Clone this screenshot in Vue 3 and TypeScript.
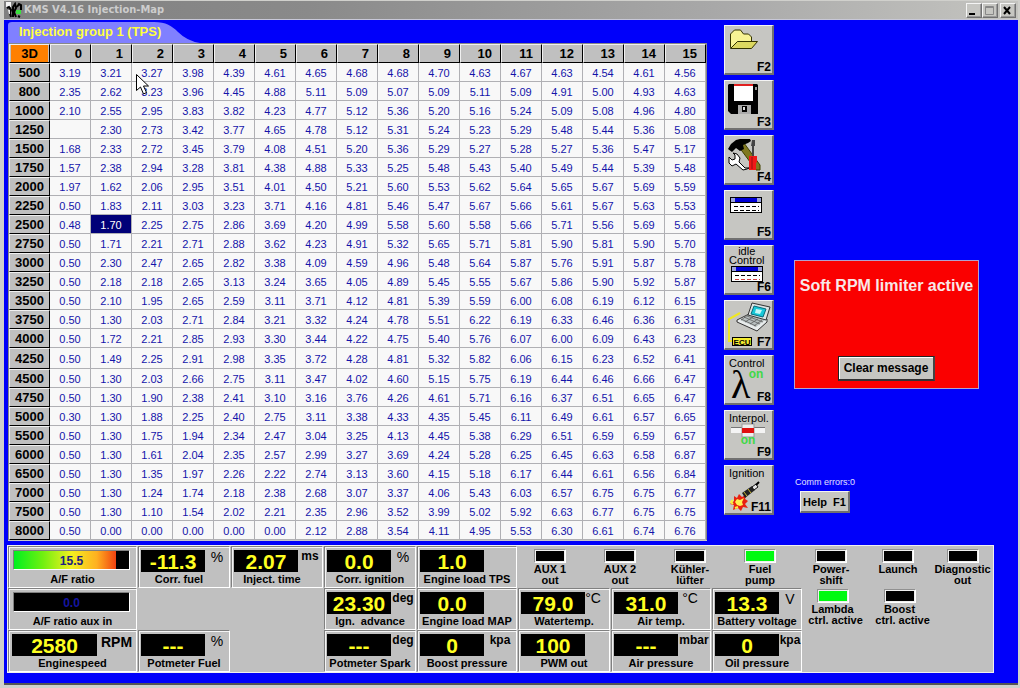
<script setup lang="ts">
import { ref } from 'vue'

interface Gauge {
  label: string
  value: string
  unit?: string
  area: string
  kind?: 'wide' | 'bar' | 'barOff'
  unitStyle?: 'plain' | 'large'
}

interface Lamp {
  lines: string[]
  on: boolean
}

const columns = Array.from({ length: 16 }, (_, i) => i)

const source = `500|3.19 3.21 3.27 3.98 4.39 4.61 4.65 4.68 4.68 4.70 4.63 4.67 4.63 4.54 4.61 4.56
800|2.35 2.62 3.23 3.96 4.45 4.88 5.11 5.09 5.07 5.09 5.11 5.09 4.91 5.00 4.93 4.63
1000|2.10 2.55 2.95 3.83 3.82 4.23 4.77 5.12 5.36 5.20 5.16 5.24 5.09 5.08 4.96 4.80
1250|- 2.30 2.73 3.42 3.77 4.65 4.78 5.12 5.31 5.24 5.23 5.29 5.48 5.44 5.36 5.08
1500|1.68 2.33 2.72 3.45 3.79 4.08 4.51 5.20 5.36 5.29 5.27 5.28 5.27 5.36 5.47 5.17
1750|1.57 2.38 2.94 3.28 3.81 4.38 4.88 5.33 5.25 5.48 5.43 5.40 5.49 5.44 5.39 5.48
2000|1.97 1.62 2.06 2.95 3.51 4.01 4.50 5.21 5.60 5.53 5.62 5.64 5.65 5.67 5.69 5.59
2250|0.50 1.83 2.11 3.03 3.23 3.71 4.16 4.81 5.46 5.47 5.67 5.66 5.61 5.67 5.63 5.53
2500|0.48 1.70 2.25 2.75 2.86 3.69 4.20 4.99 5.58 5.60 5.58 5.66 5.71 5.56 5.69 5.66
2750|0.50 1.71 2.21 2.71 2.88 3.62 4.23 4.91 5.32 5.65 5.71 5.81 5.90 5.81 5.90 5.70
3000|0.50 2.30 2.47 2.65 2.82 3.38 4.09 4.59 4.96 5.48 5.64 5.87 5.76 5.91 5.87 5.78
3250|0.50 2.18 2.18 2.65 3.13 3.24 3.65 4.05 4.89 5.45 5.55 5.67 5.86 5.90 5.92 5.87
3500|0.50 2.10 1.95 2.65 2.59 3.11 3.71 4.12 4.81 5.39 5.59 6.00 6.08 6.19 6.12 6.15
3750|0.50 1.30 2.03 2.71 2.84 3.21 3.32 4.24 4.78 5.51 6.22 6.19 6.33 6.46 6.36 6.31
4000|0.50 1.72 2.21 2.85 2.93 3.30 3.44 4.22 4.75 5.40 5.76 6.07 6.00 6.09 6.43 6.23
4250|0.50 1.49 2.25 2.91 2.98 3.35 3.72 4.28 4.81 5.32 5.82 6.06 6.15 6.23 6.52 6.41
4500|0.50 1.30 2.03 2.66 2.75 3.11 3.47 4.02 4.60 5.15 5.75 6.19 6.44 6.46 6.66 6.47
4750|0.50 1.30 1.90 2.38 2.41 3.10 3.16 3.76 4.26 4.61 5.71 6.16 6.37 6.51 6.65 6.47
5000|0.30 1.30 1.88 2.25 2.40 2.75 3.11 3.38 4.33 4.35 5.45 6.11 6.49 6.61 6.57 6.65
5500|0.50 1.30 1.75 1.94 2.34 2.47 3.04 3.25 4.13 4.45 5.38 6.29 6.51 6.59 6.59 6.57
6000|0.50 1.30 1.61 2.04 2.35 2.57 2.99 3.27 3.69 4.24 5.28 6.25 6.45 6.63 6.58 6.87
6500|0.50 1.30 1.35 1.97 2.26 2.22 2.74 3.13 3.60 4.15 5.18 6.17 6.44 6.61 6.56 6.84
7000|0.50 1.30 1.24 1.74 2.18 2.38 2.68 3.07 3.37 4.06 5.43 6.03 6.57 6.75 6.75 6.77
7500|0.50 1.30 1.10 1.54 2.02 2.21 2.35 2.96 3.52 3.99 5.02 5.92 6.63 6.77 6.75 6.75
8000|0.50 0.00 0.00 0.00 0.00 0.00 2.12 2.88 3.54 4.11 4.95 5.53 6.30 6.61 6.74 6.76`

const rows = source.split('\n').map((line) => {
  const [rpm, values] = line.split('|')
  return { rpm, values: values.split(' ').map((v) => (v === '-' ? '' : v)) }
})

const selected = ref({ rpm: '2500', column: 1 })

const tools = [
  { key: 'F2', name: 'Open', caption: '' },
  { key: 'F3', name: 'Save', caption: '' },
  { key: 'F4', name: 'Settings', caption: '' },
  { key: 'F5', name: 'Table', caption: '' },
  { key: 'F6', name: 'Idle control', caption: 'idle\nControl' },
  { key: 'F7', name: 'ECU link', caption: '' },
  { key: 'F8', name: 'Lambda control', caption: 'Control' },
  { key: 'F9', name: 'Interpolation', caption: 'Interpol.' },
  { key: 'F11', name: 'Ignition', caption: 'Ignition' },
]

const mainGauges: Gauge[] = [
  { label: 'A/F ratio', value: '15.5', area: 'a1', kind: 'bar' },
  { label: 'Corr. fuel', value: '-11.3', unit: '%', area: 'b1', unitStyle: 'large' },
  { label: 'Inject. time', value: '2.07', unit: 'ms', area: 'c1' },
  { label: 'Corr. ignition', value: '0.0', unit: '%', area: 'd1', unitStyle: 'large' },
  { label: 'Engine load TPS', value: '1.0', area: 'e1' },
  { label: 'A/F ratio aux in', value: '0.0', area: 'a2', kind: 'barOff' },
  { label: 'Ign.\u00a0 advance', value: '23.30', unit: 'deg', area: 'd2' },
  { label: 'Engine load MAP', value: '0.0', area: 'e2' },
  { label: 'Enginespeed', value: '2580', unit: 'RPM', area: 'a3', kind: 'wide' },
  { label: 'Potmeter Fuel', value: '---', unit: '%', area: 'b3', unitStyle: 'large' },
  { label: 'Potmeter Spark', value: '---', unit: 'deg', area: 'd3' },
  { label: 'Boost pressure', value: '0', unit: 'kpa', area: 'e3' },
]

const sensorGauges: Gauge[] = [
  { label: 'Watertemp.', value: '79.0', unit: '°C', area: 'a1', unitStyle: 'plain' },
  { label: 'Air temp.', value: '31.0', unit: '°C', area: 'b1', unitStyle: 'plain' },
  { label: 'Battery voltage', value: '13.3', unit: 'V', area: 'c1', unitStyle: 'large' },
  { label: 'PWM out', value: '100', area: 'a2' },
  { label: 'Air pressure', value: '---', unit: 'mbar', area: 'b2' },
  { label: 'Oil pressure', value: '0', unit: 'kpa', area: 'c2' },
]

const outputs: Lamp[] = [
  { lines: ['AUX 1', 'out'], on: false },
  { lines: ['AUX 2', 'out'], on: false },
  { lines: ['Kühler-', 'lüfter'], on: false },
  { lines: ['Fuel', 'pump'], on: true },
  { lines: ['Power-', 'shift'], on: false },
  { lines: ['Launch'], on: false },
  { lines: ['Diagnostic', 'out'], on: false },
]

const controls: Lamp[] = [
  { lines: ['Lambda', '\u00a0\u00a0ctrl. active'], on: true },
  { lines: ['Boost', '\u00a0\u00a0ctrl. active'], on: false },
]
</script>

<template>
  <div class="window">
    <header class="titlebar">
      <svg class="app-icon" viewBox="0 0 16 16" aria-hidden="true">
        <rect x="0" y="0" width="5" height="5" fill="#f4f4f4" />
        <path d="M1 6l2-1 2 3-1 3 1 4M7 15V5l2-3 1 4-2 4 2 5M11 5l2-3 2 1v5M12 14l2 1" fill="none" stroke="#000" stroke-width="2" />
        <path d="M2 8h2v4H3z" fill="#e8e8e8" />
        <rect x="10" y="8" width="5" height="4" fill="#39e03c" />
      </svg>
      <h1>KMS V4.16 Injection-Map</h1>
      <div class="caption-buttons">
        <button type="button" aria-label="Minimize">
          <svg viewBox="0 0 12 11"><rect x="2" y="8" width="6" height="2" fill="#000" /></svg>
        </button>
        <button type="button" aria-label="Maximize">
          <svg viewBox="0 0 12 11"><path d="M2.5 1.5h8v8h-8zM2 2.5h9" fill="none" stroke="#888" /></svg>
        </button>
        <button type="button" class="close" aria-label="Close">
          <svg viewBox="0 0 12 11"><path d="M3 2l6 7M9 2l-6 7" fill="none" stroke="#000" stroke-width="2" /></svg>
        </button>
      </div>
    </header>

    <main class="client">
      <div class="upper">
        <section class="map">
          <div class="tab">
            <svg class="tab-shape" viewBox="0 0 192 21" aria-hidden="true">
              <path d="M0 21V3Q0 0 4 0H146C158 0 164 4 170 10Q179 19 192 21Z" fill="#8080ff" />
            </svg>
            <h2>Injection group 1 (TPS)</h2>
          </div>
          <table>
            <thead>
              <tr>
                <th class="corner"><button type="button">3D</button></th>
                <th v-for="c in columns" :key="c" scope="col" class="col-head">{{ c }}</th>
              </tr>
            </thead>
            <tbody>
              <tr v-for="row in rows" :key="row.rpm" :class="{ tall: row.rpm === '4250' }">
                <th scope="row">{{ row.rpm }}</th>
                <td
                  v-for="(v, i) in row.values"
                  :key="i"
                  :class="{ selected: selected.rpm === row.rpm && selected.column === i }"
                  @click="selected = { rpm: row.rpm, column: i }"
                >{{ v }}</td>
              </tr>
            </tbody>
          </table>
        </section>

        <nav class="tools" aria-label="Functions">
          <button v-for="t in tools" :key="t.key" type="button" :title="t.name">
            <svg viewBox="0 0 50 50" aria-hidden="true">
              <g v-if="t.key === 'F2'" stroke="#333300" stroke-linejoin="round">
                <path d="M6.500 22V9l4-4h6l3 4h5l3 3v5H13l-6 6z" fill="#f8f494" />
                <path d="M6.500 23.500l7-7h20l-6 7z" fill="#dcd860" />
              </g>
              <g v-else-if="t.key === 'F3'">
                <path d="M5 4h28l1 1v29H7l-3-3V5z" fill="#000" />
                <rect x="10" y="4" width="19" height="2" fill="#e02020" />
                <rect x="10" y="6" width="19" height="15" fill="#fff" />
                <rect x="31" y="7" width="2" height="3" fill="#999" />
                <rect x="14" y="25" width="13" height="9" fill="#aaa" />
                <rect x="18" y="26" width="5" height="6" fill="#000" />
                <rect x="19" y="27" width="2" height="3" fill="#ddd" />
              </g>
              <g v-else-if="t.key === 'F4'">
                <path d="M15 12l5-4 16 22v5h-4z" fill="#807820" stroke="#404000" />
                <path d="M4 14l3-5 5-4 4-1 10 0 1 2-3 2-5 2 1 4-4 2-4-3-4 4z" fill="#000" />
                <path d="M28 5h3v6h-1v10h-2V11h-1z" fill="#444" />
                <path d="M25 21h8v6l-1 1v7h-7v-7z" fill="#f01818" />
                <path d="M28 22v12" stroke="#901010" />
                <path d="M5 22l3 3 3-1v-4l-2-2 4 1 3 4-1 4 6 6h4l-2 1-4 1-7-6-4 2-3-3z" fill="#fff" stroke="#000" />
              </g>
              <g v-else-if="t.key === 'F5' || t.key === 'F6'" :transform="t.key === 'F6' ? 'translate(1 14)' : undefined">
                <rect x="6.500" y="7.500" width="31" height="15" fill="#fff" stroke="#000" />
                <rect x="7" y="8" width="30" height="4" fill="#0000d8" />
                <path d="M7 8h4v4H7zM33 8h4v4h-4z" fill="#9ca4dc" />
                <path d="M7 12.500h30" stroke="#000" />
                <path d="M10 16.500h25" stroke="#000" stroke-dasharray="4 2" />
                <path d="M10 20.500h25" :stroke="t.key === 'F6' ? '#d04040' : '#000'" stroke-dasharray="4 2" />
              </g>
              <g v-else-if="t.key === 'F7'">
                <path d="M8 41H5V19l11-6" fill="none" stroke="#f0e820" stroke-width="2" />
                <path d="M25 14l-12 6v2l20 9 10-9v-3z" fill="#e8ecec" stroke="#333" />
                <path d="M24 15l17 5-9 7-16-7z" fill="#b8c0c0" />
                <path d="M20 17l16 7M17 19l15 7M23 16l16 6M24 15l-7 5M29 17l-8 5M34 19l-8 5M38 20l-8 6" stroke="#555" stroke-width=".7" />
                <path d="M28 3l18 4-4 13-18-5z" fill="#dce4e4" stroke="#333" />
                <path d="M30 6l12 3-3 8-12-3z" fill="#18c8d8" stroke="#086878" />
                <path d="M32 9l6 1-2 4-5-1z" fill="#c8f8f8" />
                <rect x="8.500" y="37.500" width="19" height="8" fill="#f4ec30" stroke="#000" />
                <text x="18" y="45" text-anchor="middle" class="ecu">ECU</text>
              </g>
              <g v-else-if="t.key === 'F8'">
                <text x="7" y="43" class="lambda">λ</text>
                <text x="32" y="23" text-anchor="middle" class="on">on</text>
              </g>
              <g v-else-if="t.key === 'F9'">
                <rect x="7" y="17" width="34" height="6" fill="#f4f4f4" />
                <path d="M7 17.500h34" stroke="#777" />
                <rect x="18" y="14" width="12" height="13" fill="#eee" stroke="#999" />
                <rect x="18" y="18" width="12" height="5" fill="#e01010" />
                <text x="24" y="34" text-anchor="middle" class="on">on</text>
              </g>
              <g v-else>
                <path d="M10 31l3 2 2-4 3 3 5-3-2 5 3 2-3 3 3 4-5-1-2 4-3-3-5 2 1-5-4-1 4-3z" fill="#e82010" />
                <path d="M13 34l3 1 4-2-2 4 1 3-3 1-3-1-2-3z" fill="#fff050" />
                <path d="M9 35l-2 2 2 2M11 43l3-1" stroke="#f8f040" stroke-width="2" fill="none" />
                <path d="M18 28l10-7 3 4-10 8z" fill="#222" />
                <path d="M20 27l3 4M24 24l3 4" stroke="#c8b830" />
                <path d="M28 22l4-3 2 3-4 3z" fill="#e8e8e8" stroke="#111" />
                <path d="M32 20l3-3" stroke="#000" stroke-width="2" />
              </g>
            </svg>
            <span v-if="t.caption" class="tool-caption" :class="{ stacked: t.key === 'F6' }">{{ t.caption }}</span>
            <span class="tool-key">{{ t.key }}</span>
          </button>
        </nav>

        <aside class="side">
          <section class="alert" role="alert">
            <p>Soft RPM limiter active</p>
            <button type="button">Clear message</button>
          </section>
          <div class="status">
            <p>Comm errors:0</p>
            <button type="button">Help&nbsp; F1</button>
          </div>
        </aside>
      </div>

      <section class="dashboard">
        <div class="gauges main-gauges">
          <div v-for="g in mainGauges" :key="g.label" class="gauge" :class="[g.area, g.kind]">
            <div class="reading">
              <output :aria-label="g.label">{{ g.value }}</output>
              <span v-if="g.unit" class="unit" :class="g.unitStyle">{{ g.unit }}</span>
            </div>
            <span class="gauge-label">{{ g.label }}</span>
          </div>
        </div>
        <div class="right-dash">
          <div class="outputs">
            <div v-for="l in outputs" :key="l.lines[0]" class="lamp">
              <i :class="{ on: l.on }"></i>
              <span v-for="line in l.lines" :key="line">{{ line }}</span>
            </div>
          </div>
          <div class="sensor-row">
            <div class="gauges sensor-gauges">
              <div v-for="g in sensorGauges" :key="g.label" class="gauge" :class="g.area">
                <div class="reading">
                  <output :aria-label="g.label">{{ g.value }}</output>
                  <span v-if="g.unit" class="unit" :class="g.unitStyle">{{ g.unit }}</span>
                </div>
                <span class="gauge-label">{{ g.label }}</span>
              </div>
            </div>
            <div class="controls">
              <div v-for="l in controls" :key="l.lines[0]" class="lamp">
                <i :class="{ on: l.on }"></i>
                <span v-for="line in l.lines" :key="line">{{ line }}</span>
              </div>
            </div>
          </div>
        </div>
      </section>
    </main>

    <svg class="pointer" viewBox="0 0 13 21" aria-hidden="true">
      <path d="M.5 .5v16l4-3.500 3 7 3-1.500-3-6.500h5z" fill="#fff" stroke="#000" />
    </svg>
  </div>
</template>

<style>
body {
  margin: 0;
}
</style>

<style scoped>
.window {
  position: relative;
  box-sizing: border-box;
  min-height: 100vh;
  display: flex;
  flex-direction: column;
  border: solid #d0d0cc;
  border-width: 1px 2px 3px 4px;
  box-shadow: inset 0 -2px 0 #555;
  background: #0000fa;
  font-family: "Liberation Sans", Arial, sans-serif;
  color: #000;
}

h1,
h2,
p {
  margin: 0;
}

button {
  box-sizing: border-box;
  padding: 0;
  font-family: inherit;
  color: #000;
  background: #c6c6c2;
  border: solid;
  border-color: #f4f4f4 #707070 #707070 #f4f4f4;
}

.titlebar {
  display: flex;
  align-items: center;
  height: 18px;
  padding: 0 2px;
  border-bottom: 1px solid #c8c8d8;
  background: linear-gradient(90deg, #808080, #8a8a8a 30%, #a8a8a8 70%, #c4c4c0);
}

.app-icon {
  width: 16px;
  height: 16px;
}

h1 {
  flex: 1;
  margin-left: 2px;
  font: bold 11px/18px "DejaVu Sans Condensed", "DejaVu Sans", sans-serif;
  color: #cdcdcd;
}

.caption-buttons {
  display: flex;
}

.caption-buttons button {
  width: 16px;
  height: 15px;
  border-width: 1px;
  box-shadow: inset -1px -1px 0 #999;
}

.caption-buttons .close {
  margin-left: 2px;
}

.caption-buttons svg {
  display: block;
  width: 12px;
  height: 11px;
}

.upper {
  display: grid;
  grid-template-columns: minmax(0, 1fr) 50px 244px;
  padding-left: 4px;
}

.map {
  margin: 2px 17px 0 0;
}

.tab {
  display: grid;
  justify-content: start;
  height: 21px;
}

.tab > * {
  grid-area: 1 / 1;
}

.tab-shape {
  width: 192px;
  height: 21px;
}

h2 {
  padding-left: 11px;
  font-size: 13px;
  line-height: 20px;
  color: #ffff40;
}

table {
  width: 100%;
  table-layout: fixed;
  border-collapse: separate;
  border-spacing: 0;
  border: 1px solid #888;
  border-bottom-width: 0;
  box-shadow: 0 1px 0 #c8c8c8;
}

th,
td {
  box-sizing: border-box;
  height: 19px;
  padding: 0;
  line-height: 16px;
}

th {
  padding-top: 1px;
  font-size: 13px;
  background: #c0c0c0;
  border: solid;
  border-width: 1px;
  border-color: #f0f0f0 #000 #000 #f0f0f0;
}

.col-head {
  padding-right: 8px;
  text-align: right;
}

.corner {
  padding-top: 0;
}

.corner button {
  display: block;
  width: 37px;
  height: 17px;
  margin: 0 auto;
  border: 0;
  background: #ff8000;
  font-size: 13px;
  font-weight: bold;
}

td {
  padding-top: 1px;
  border: solid #b0b0b4;
  border-width: 0 1px 1px 0;
  background: #f8f8f8;
  color: #1414aa;
  font-size: 11px;
  text-align: center;
}

td.selected {
  background: #000078;
  color: #fff;
}

.tall > * {
  height: 21px;
}

.tools {
  display: flex;
  flex-direction: column;
  gap: 5px;
  padding-top: 5px;
}

.tools button {
  display: grid;
  width: 50px;
  height: 50px;
  border-width: 1px 2px 2px 1px;
}

.tools button > * {
  grid-area: 1 / 1;
}

.tools svg {
  width: 50px;
  height: 50px;
  margin: -1px;
  overflow: visible;
}

.tool-caption {
  align-self: start;
  justify-self: start;
  padding: 2px 0 0 4px;
  font-size: 11px;
  line-height: 10px;
  white-space: pre;
}

.tool-caption.stacked {
  padding-top: 1px;
  line-height: 9px;
}

.tool-key {
  align-self: end;
  justify-self: end;
  padding-right: 2px;
  font-size: 12px;
  line-height: 14px;
  font-weight: bold;
}

.ecu {
  font-size: 8px;
  font-weight: bold;
}

.lambda {
  font-family: "Liberation Serif", serif;
  font-size: 40px;
}

.on {
  font-size: 12px;
  font-weight: bold;
  fill: #40d848;
}

.side {
  padding-left: 20px;
}

.alert {
  box-sizing: border-box;
  display: flex;
  flex-direction: column;
  align-items: center;
  justify-content: space-between;
  width: 185px;
  min-height: 129px;
  margin-top: 240px;
  padding: 16px 0 7px;
  border: 1px solid #b0a0d0;
  background: #fa0000;
}

.alert p {
  font-size: 16px;
  line-height: 18px;
  font-weight: bold;
  color: #f8e8e8;
  white-space: nowrap;
}

.alert button {
  width: 97px;
  height: 25px;
  border-width: 1px 2px 2px 1px;
  border-color: #222 #444 #333 #222;
  box-shadow: inset 1px 1px 0 #fff;
  font-size: 12px;
  font-weight: bold;
}

.status {
  display: flex;
  flex-direction: column;
  align-items: center;
  width: 62px;
  margin-top: 87px;
}

.status p {
  font-size: 9px;
  line-height: 12px;
  color: #e0e0ff;
  white-space: nowrap;
}

.status button {
  width: 50px;
  height: 22px;
  margin-top: 3px;
  border-width: 1px 2px 2px 1px;
  font-size: 11px;
  font-weight: bold;
  white-space: nowrap;
}

.dashboard {
  display: flex;
  margin: 5px 24px 10px 3px;
  border: 1px solid #f0f0f0;
  background: #c0c0c0;
  font-weight: bold;
  font-size: 11px;
}

.gauges {
  display: grid;
  grid-auto-rows: 42px;
}

.main-gauges {
  grid-template-columns: 130px 93px 93px 93px 101px;
}

.sensor-gauges {
  grid-template-columns: 93px 101px 91px;
}

.gauge {
  box-sizing: border-box;
  display: flex;
  flex-direction: column;
  margin: 0 1px 0 0;
  padding: 2px 0 0 2px;
  border: solid;
  border-width: 1px;
  border-color: #808080 #fff #fff #808080;
  box-shadow: inset 1px 1px 0 #f4f4f4;
}

.a1 { grid-area: 1 / 1; }
.b1 { grid-area: 1 / 2; }
.c1 { grid-area: 1 / 3; }
.d1 { grid-area: 1 / 4; }
.e1 { grid-area: 1 / 5; }
.a2 { grid-area: 2 / 1; }
.b2 { grid-area: 2 / 2; }
.c2 { grid-area: 2 / 3; }
.d2 { grid-area: 2 / 4; }
.e2 { grid-area: 2 / 5; }
.a3 { grid-area: 3 / 1; }
.b3 { grid-area: 3 / 2; }
.d3 { grid-area: 3 / 4; }
.e3 { grid-area: 3 / 5; }

.reading {
  display: flex;
  height: 23px;
}

output {
  flex: none;
  width: 64px;
  height: 22px;
  margin-top: 1px;
  background: #000;
  color: #ffff20;
  font-size: 21px;
  line-height: 24px;
  text-align: center;
}

.unit {
  flex: 1;
  font-size: 12px;
  line-height: 14px;
  text-align: center;
  white-space: nowrap;
}

.unit.large {
  font-size: 14px;
  line-height: 16px;
  font-weight: normal;
}

.unit.plain {
  font-size: 14px;
  font-weight: normal;
  padding-right: 8px;
}

.gauge-label {
  padding-right: 2px;
  line-height: 14px;
  text-align: center;
  white-space: nowrap;
}

.main-gauges .b1 .gauge-label,
.main-gauges .c1 .gauge-label {
  padding-right: 12px;
}

.wide output {
  width: 85px;
  margin-left: 1px;
}

.wide .unit {
  font-size: 14px;
  line-height: 18px;
}

.bar output,
.barOff output {
  box-sizing: border-box;
  width: 117px;
  height: 20px;
  margin-left: 2px;
  border: solid;
  border-width: 1px;
  border-color: #808080 #fff #fff #808080;
  font-size: 12px;
  line-height: 20px;
  color: #202080;
}

.bar output {
  background: linear-gradient(90deg, #00f020, #70f010 25%, #f4f020 50%, #ffb020 72%, #f04010 89%, #000 89%);
}

.barOff output {
  background: #000;
  color: #1414a0;
}

.right-dash {
  flex: 1;
}

.outputs {
  display: grid;
  grid-template-columns: 64px 76px 64px 76px 66px 68px 1fr;
  height: 42px;
}

.sensor-row {
  display: flex;
}

.controls {
  display: grid;
  grid-template-columns: 59px 75px;
}

.lamp {
  display: flex;
  flex-direction: column;
  align-items: center;
  padding-top: 3px;
  line-height: 11px;
  white-space: nowrap;
}

.controls .lamp {
  padding-top: 1px;
}

.lamp i {
  box-sizing: border-box;
  width: 32px;
  height: 14px;
  margin-bottom: 1px;
  border: solid;
  border-width: 1px;
  border-color: #909090 #fff #fff #909090;
  box-shadow: inset 0 0 0 1px #f0f0f0;
  background: #000;
}

.lamp i.on {
  background: #00fa10;
}

.pointer {
  position: absolute;
  left: 132px;
  top: 73px;
  width: 13px;
  height: 21px;
}
</style>
